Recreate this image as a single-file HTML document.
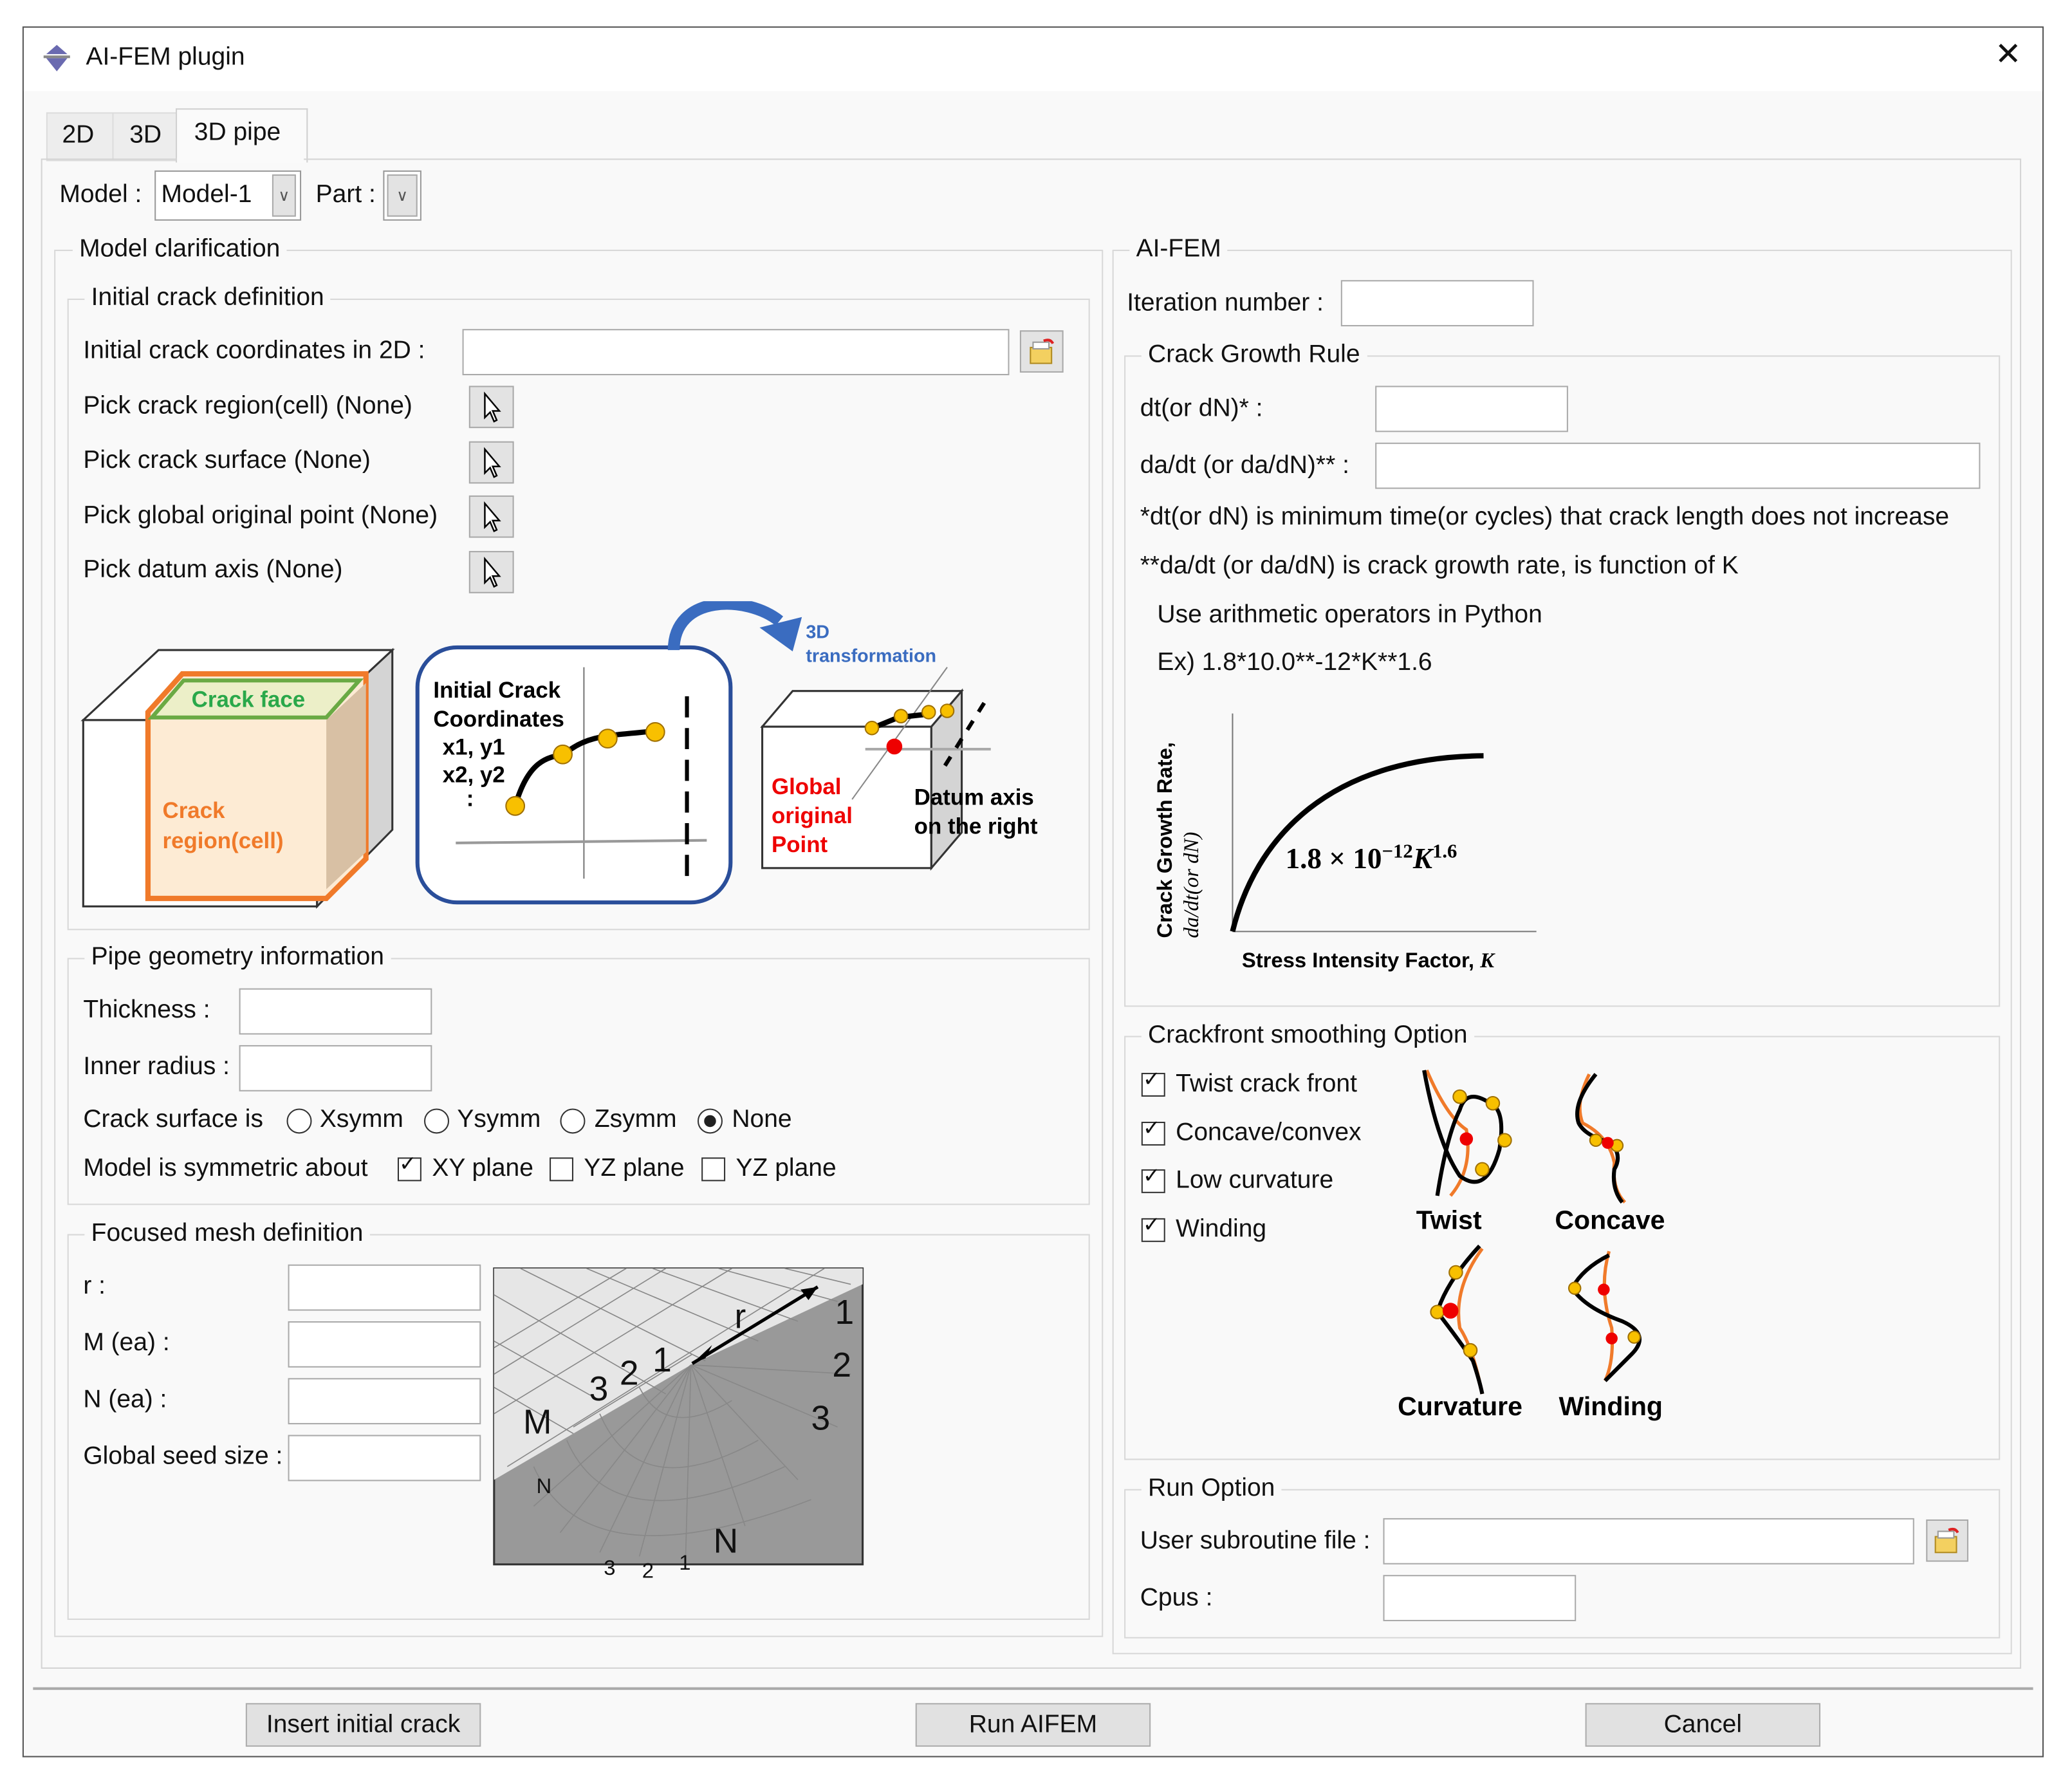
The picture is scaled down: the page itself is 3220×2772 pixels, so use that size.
<!DOCTYPE html>
<html><head><meta charset="utf-8"><style>
html,body{margin:0;padding:0;background:#fff;width:3220px;height:2772px;overflow:hidden}
#s{position:absolute;left:0;top:0;width:1570px;height:1350px;transform:scale(2.053);transform-origin:0 0;font-family:"Liberation Sans",sans-serif;font-size:19px;color:#111}
.a{position:absolute}
.t{position:absolute;white-space:nowrap;line-height:20px}
.g{position:absolute;border:1px solid #d8d8d8}
.gl{position:absolute;background:#f9f9f9;padding:0 5px;white-space:nowrap;line-height:20px}
.in{position:absolute;background:#fff;border:1px solid #aaa;box-sizing:border-box}
.pb{position:absolute;width:34px;height:32px;background:#e3e3e3;border:1px solid #a9a9a9;box-sizing:border-box}
.btn{position:absolute;height:33px;background:#e1e1e1;border:1px solid #adadad;box-sizing:border-box;text-align:center;line-height:31px}
.cb{position:absolute;width:18px;height:18px;border:1.5px solid #333;box-sizing:border-box;background:#fff}
.rd{position:absolute;width:19px;height:19px;border:1.5px solid #333;border-radius:50%;box-sizing:border-box;background:#fff}
</style></head><body><div id="s">
<div class="a" style="left:17px;top:20px;width:1528px;height:1308px;border:1.5px solid #555;background:#f9f9f9"></div>
<div class="a" style="left:18px;top:21px;width:1528px;height:48px;background:#fff"></div>
<svg class="a" style="left:31px;top:32px" width="24" height="24"><path d="M12 2 L20 9 H4 Z M4 12 H20 L12 22 Z" fill="#6a6ab0"/><rect x="2" y="10" width="20" height="2" fill="#888"/></svg>
<div class="t" style="left:65px;top:34px">AI-FEM plugin</div>
<div class="t" style="left:1510px;top:32px;font-size:24px">✕</div>
<div class="a" style="left:35px;top:85px;width:50px;height:35px;background:#ededed;border:1px solid #dcdcdc"></div>
<div class="a" style="left:85px;top:85px;width:48px;height:35px;background:#ededed;border:1px solid #dcdcdc"></div>
<div class="a" style="left:133px;top:82px;width:98px;height:40px;background:#fafafa;border:1px solid #d0d0d0;border-bottom:none"></div>
<div class="t" style="left:47px;top:93px">2D</div>
<div class="t" style="left:98px;top:93px">3D</div>
<div class="t" style="left:147px;top:91px">3D pipe</div>
<div class="a" style="left:31px;top:120px;width:1497px;height:1141px;border:1px solid #d4d4d4"></div>
<div class="a" style="left:134px;top:119px;width:96px;height:3px;background:#fafafa"></div>
<div class="t" style="left:45px;top:138px">Model :</div>
<div class="in" style="left:117px;top:129px;width:111px;height:38px;border-color:#999"></div>
<div class="t" style="left:122px;top:138px">Model-1</div>
<div class="a" style="left:206px;top:132px;width:18px;height:32px;background:#e3e3e3;border:1px solid #aaa;box-sizing:border-box;text-align:center;font-size:12px;line-height:30px;color:#555">∨</div>
<div class="t" style="left:239px;top:138px">Part :</div>
<div class="in" style="left:290px;top:129px;width:29px;height:38px;border-color:#999"></div>
<div class="a" style="left:293px;top:132px;width:23px;height:32px;background:#e3e3e3;border:1px solid #aaa;box-sizing:border-box;text-align:center;font-size:12px;line-height:30px;color:#555">∨</div>

<div class="g" style="left:41px;top:189px;width:792px;height:1048px"></div>
<div class="gl" style="left:55px;top:179px">Model clarification</div>
<div class="g" style="left:51px;top:226px;width:772px;height:476px"></div>
<div class="gl" style="left:64px;top:216px">Initial crack definition</div>
<div class="t" style="left:63px;top:256px">Initial crack coordinates in 2D :</div>
<div class="in" style="left:350px;top:249px;width:414px;height:35px"></div>
<div class="pb" style="left:772px;top:250px;width:33px"></div>
<svg class="a" style="left:778px;top:254px" width="22" height="24"><rect x="2" y="9" width="16" height="12" fill="#f3d060" stroke="#b08a20"/><rect x="4" y="5" width="12" height="5" fill="#fff" stroke="#999"/><path d="M12 4 Q17 2 19 6" stroke="#d22" fill="none" stroke-width="2"/></svg>
<div class="t" style="left:63px;top:298px">Pick crack region(cell) (None)</div>
<div class="t" style="left:63px;top:339px">Pick crack surface (None)</div>
<div class="t" style="left:63px;top:381px">Pick global original point (None)</div>
<div class="t" style="left:63px;top:422px">Pick datum axis (None)</div>
<div class="pb" style="left:355px;top:292px"></div><div class="pb" style="left:355px;top:334px"></div><div class="pb" style="left:355px;top:375px"></div><div class="pb" style="left:355px;top:417px"></div>
<svg class="a" style="left:355px;top:292px" width="34" height="160"><g fill="#fff" stroke="#000" stroke-width="1.2"><path id="c" d="M12 6 V24 L16 20 L19 27 L21 26 L18 19 L23 19 Z"/><use href="#c" y="42"/><use href="#c" y="83"/><use href="#c" y="125"/></g></svg>
<svg class="a" style="left:55px;top:455px" width="760" height="240" font-family="Liberation Sans" font-weight="bold">
<path d="M8 90 L65 37 H242 L185 90 Z" fill="#fff" stroke="#333" stroke-width="1.5"/>
<rect x="8" y="90" width="177" height="141" fill="#fff" stroke="#333" stroke-width="1.5"/>
<path d="M185 90 L242 37 V173 L185 231 Z" fill="#d4d4d4" stroke="#333" stroke-width="1.5"/>
<path d="M57 84 L83 55 H222 L222 195 L192 225 H57 Z" fill="#fdebd4" stroke="#f07a2a" stroke-width="4"/>
<path d="M192 90 L222 62 V190 L192 218 Z" fill="#d8c0a4"/>
<path d="M60 88 L84 60 H217 L192 88 Z" fill="#ecefc8" stroke="#6aaa44" stroke-width="3"/>
<text x="90" y="80" fill="#2aa84a" font-size="17">Crack face</text>
<text x="68" y="164" fill="#f07a2a" font-size="17">Crack</text>
<text x="68" y="187" fill="#f07a2a" font-size="17">region(cell)</text>
<rect x="261" y="35" width="237" height="193" rx="30" fill="#fff" stroke="#2a4e9a" stroke-width="3"/>
<path d="M455 37 C455 -5 510 -5 535 15" fill="none" stroke="#3a6cc0" stroke-width="9"/>
<path d="M520 20 L552 12 L545 38 Z" fill="#3a6cc0"/>
<text x="555" y="28" fill="#3a6cc0" font-size="14">3D</text>
<text x="555" y="46" fill="#3a6cc0" font-size="14">transformation</text>
<line x1="387" y1="210" x2="387" y2="50" stroke="#777"/><line x1="290" y1="183" x2="480" y2="181" stroke="#999" stroke-width="2"/>
<line x1="465" y1="72" x2="465" y2="210" stroke="#000" stroke-width="3" stroke-dasharray="16 8"/>
<text x="273" y="73" font-size="17">Initial Crack</text><text x="273" y="95" font-size="17">Coordinates</text>
<text x="280" y="116" font-size="17">x1, y1</text><text x="280" y="137" font-size="17">x2, y2</text><text x="298" y="155" font-size="17">:</text>
<path d="M335 155 C345 120 360 118 372 116 C390 100 410 102 442 98" fill="none" stroke="#000" stroke-width="4"/>
<g fill="#f8c000" stroke="#a07000"><circle cx="335" cy="155" r="7"/><circle cx="371" cy="116" r="7"/><circle cx="405" cy="104" r="7"/><circle cx="441" cy="99" r="7"/></g>
<path d="M522 95 L545 68 H673 L650 95 Z" fill="#fff" stroke="#333" stroke-width="1.5"/>
<rect x="522" y="95" width="128" height="107" fill="#fff" stroke="#333" stroke-width="1.5"/>
<path d="M650 95 L673 68 V175 L650 202 Z" fill="#d4d4d4" stroke="#333" stroke-width="1.5"/>
<line x1="600" y1="112" x2="695" y2="112" stroke="#aaa" stroke-width="2"/><line x1="590" y1="150" x2="662" y2="50" stroke="#888"/>
<path d="M603 97 L625 88 L652 85" stroke="#000" stroke-width="4" fill="none"/>
<g fill="#f8c000" stroke="#a07000"><circle cx="605" cy="96" r="5"/><circle cx="627" cy="87" r="5"/><circle cx="648" cy="84" r="5"/><circle cx="662" cy="83" r="5"/></g>
<circle cx="622" cy="110" r="6" fill="#e00"/>
<line x1="690" y1="77" x2="660" y2="125" stroke="#000" stroke-width="3" stroke-dasharray="8 8"/>
<text x="529" y="146" fill="#e00" font-size="17">Global</text><text x="529" y="168" fill="#e00" font-size="17">original</text><text x="529" y="190" fill="#e00" font-size="17">Point</text>
<text x="637" y="154" font-size="17">Datum axis</text><text x="637" y="176" font-size="17">on the right</text>
</svg>

<div class="g" style="left:51px;top:725px;width:772px;height:185px"></div>
<div class="gl" style="left:64px;top:715px">Pipe geometry information</div>
<div class="t" style="left:63px;top:755px">Thickness :</div>
<div class="in" style="left:181px;top:748px;width:146px;height:35px"></div>
<div class="t" style="left:63px;top:798px">Inner radius :</div>
<div class="in" style="left:181px;top:791px;width:146px;height:35px"></div>
<div class="t" style="left:63px;top:838px">Crack surface is</div>
<div class="rd" style="left:217px;top:839px"></div><div class="t" style="left:242px;top:838px">Xsymm</div>
<div class="rd" style="left:321px;top:839px"></div><div class="t" style="left:346px;top:838px">Ysymm</div>
<div class="rd" style="left:424px;top:839px"></div><div class="t" style="left:450px;top:838px">Zsymm</div>
<div class="rd" style="left:528px;top:839px"></div><div class="a" style="left:533px;top:844px;width:9px;height:9px;border-radius:50%;background:#222"></div><div class="t" style="left:554px;top:838px">None</div>
<div class="t" style="left:63px;top:875px">Model is symmetric about</div>
<div class="cb" style="left:301px;top:876px"></div><div class="t" style="left:302px;top:872px;font-size:16px">✓</div><div class="t" style="left:327px;top:875px">XY plane</div>
<div class="cb" style="left:416px;top:876px"></div><div class="t" style="left:442px;top:875px">YZ plane</div>
<div class="cb" style="left:531px;top:876px"></div><div class="t" style="left:557px;top:875px">YZ plane</div>

<div class="g" style="left:51px;top:934px;width:772px;height:290px"></div>
<div class="gl" style="left:64px;top:924px">Focused mesh definition</div>
<div class="t" style="left:63px;top:964px">r :</div>
<div class="t" style="left:63px;top:1007px">M (ea) :</div>
<div class="t" style="left:63px;top:1050px">N (ea) :</div>
<div class="t" style="left:63px;top:1093px">Global seed size :</div>
<div class="in" style="left:218px;top:957px;width:146px;height:35px"></div>
<div class="in" style="left:218px;top:1000px;width:146px;height:35px"></div>
<div class="in" style="left:218px;top:1043px;width:146px;height:35px"></div>
<div class="in" style="left:218px;top:1086px;width:146px;height:35px"></div>
<svg class="a" style="left:374px;top:960px;overflow:visible" width="280" height="225" font-family="Liberation Sans">
<rect x="0" y="0" width="279" height="224" fill="#999" stroke="#333" stroke-width="1.5"/>
<path d="M0 0 H279 V12 L149 73 L0 160 Z" fill="#e6e6e6"/>
<g stroke="#888" stroke-width="0.8" fill="none">
<path d="M0 20 L130 95 M0 55 L80 100 M0 90 L60 125 M20 0 L160 70 M70 0 L200 55 M120 0 L230 40 M170 0 L260 25 M220 0 L270 12"/>
<path d="M0 60 L100 0 M0 110 L180 0 M10 150 L250 0 M60 120 L150 65 M130 0 L0 80"/>
<path d="M149 73 L30 180 M149 73 L50 200 M149 73 L80 215 M149 73 L110 218 M149 73 L145 218 M149 73 L190 195 M149 73 L230 160 M149 73 L260 120 M149 73 L270 80"/>
<path d="M110 90 Q130 130 180 100 M80 110 Q110 180 200 130 M55 130 Q90 210 220 150 M30 150 Q70 240 240 175"/>
</g>
<path d="M150 72 L245 14" stroke="#000" stroke-width="2.5"/><path d="M150 72 L165 58 L160 68 Z M245 14 L232 16 L238 24 Z" fill="#000"/>
<g font-size="26" fill="#111"><text x="182" y="45">r</text><text x="258" y="42">1</text><text x="256" y="82">2</text><text x="240" y="122">3</text><text x="120" y="78">1</text><text x="95" y="88">2</text><text x="72" y="100">3</text><text x="22" y="125">M</text><text x="166" y="215">N</text></g>
<g font-size="16" fill="#111"><text x="32" y="170">N</text><text x="83" y="232">3</text><text x="112" y="234">2</text><text x="140" y="228">1</text></g>
</svg>

<div class="g" style="left:842px;top:189px;width:679px;height:1061px"></div>
<div class="gl" style="left:855px;top:179px">AI-FEM</div>
<div class="t" style="left:853px;top:220px">Iteration number :</div>
<div class="in" style="left:1015px;top:212px;width:146px;height:35px"></div>
<div class="g" style="left:851px;top:269px;width:661px;height:491px"></div>
<div class="gl" style="left:864px;top:259px">Crack Growth Rule</div>
<div class="t" style="left:863px;top:300px">dt(or dN)* :</div>
<div class="in" style="left:1041px;top:292px;width:146px;height:35px"></div>
<div class="t" style="left:863px;top:343px">da/dt (or da/dN)** :</div>
<div class="in" style="left:1041px;top:335px;width:458px;height:35px"></div>
<div class="t" style="left:863px;top:382px">*dt(or dN) is minimum time(or cycles) that crack length does not increase</div>
<div class="t" style="left:863px;top:419px">**da/dt (or da/dN) is crack growth rate, is function of K</div>
<div class="t" style="left:876px;top:456px">Use arithmetic operators in Python</div>
<div class="t" style="left:876px;top:492px">Ex) 1.8*10.0**-12*K**1.6</div>
<svg class="a" style="left:865px;top:535px" width="310" height="210" font-family="Liberation Sans">
<line x1="68" y1="170" x2="68" y2="5" stroke="#777"/><line x1="68" y1="170" x2="298" y2="170" stroke="#777"/>
<path d="M68 170 C85 100 140 38 258 37" fill="none" stroke="#000" stroke-width="4"/>
<text x="108" y="122" font-family="Liberation Serif" font-weight="bold" font-size="22">1.8 × 10<tspan dy="-8" font-size="15">−12</tspan><tspan dy="8" font-style="italic">K</tspan><tspan dy="-8" font-size="15">1.6</tspan></text>
<text x="75" y="197" font-weight="bold" font-size="16">Stress Intensity Factor, <tspan font-style="italic" font-family="Liberation Serif">K</tspan></text>
<text transform="translate(22,175) rotate(-90)" font-weight="bold" font-size="16">Crack Growth Rate,</text>
<text transform="translate(42,175) rotate(-90)" font-style="italic" font-family="Liberation Serif" font-size="16">da/dt(or dN)</text>
</svg>
<div class="g" style="left:851px;top:784px;width:661px;height:319px"></div>
<div class="gl" style="left:864px;top:774px">Crackfront smoothing Option</div>
<div class="cb" style="left:864px;top:812px"></div><div class="t" style="left:865px;top:808px;font-size:16px">✓</div><div class="t" style="left:890px;top:811px">Twist crack front</div>
<div class="cb" style="left:864px;top:849px"></div><div class="t" style="left:865px;top:845px;font-size:16px">✓</div><div class="t" style="left:890px;top:848px">Concave/convex</div>
<div class="cb" style="left:864px;top:885px"></div><div class="t" style="left:865px;top:881px;font-size:16px">✓</div><div class="t" style="left:890px;top:884px">Low curvature</div>
<div class="cb" style="left:864px;top:922px"></div><div class="t" style="left:865px;top:918px;font-size:16px">✓</div><div class="t" style="left:890px;top:921px">Winding</div>
<svg class="a" style="left:1050px;top:805px" width="240" height="280" font-family="Liberation Sans" font-weight="bold" font-size="20">
<path d="M30 5 Q45 40 60 50 Q65 80 48 100" stroke="#f07a2a" stroke-width="2.5" fill="none"/>
<path d="M28 5 Q38 60 55 85 Q75 100 85 65 Q90 35 78 30 Q60 18 55 35 Q45 55 38 100" stroke="#000" stroke-width="3" fill="none"/>
<g fill="#f8c000" stroke="#a07000"><circle cx="55" cy="25" r="5"/><circle cx="80" cy="30" r="5"/><circle cx="89" cy="58" r="5"/><circle cx="72" cy="80" r="5"/></g><circle cx="60" cy="57" r="5" fill="#e00"/>
<text x="22" y="125">Twist</text>
<path d="M153 8 Q142 30 148 45 Q168 55 172 75 Q170 95 180 105" stroke="#f07a2a" stroke-width="2.5" fill="none"/>
<path d="M158 8 Q140 30 145 45 Q150 55 170 60 Q178 70 172 80 Q170 95 178 105" stroke="#000" stroke-width="3" fill="none"/>
<g fill="#f8c000" stroke="#a07000"><circle cx="158" cy="58" r="4.5"/><circle cx="174" cy="62" r="4.5"/></g><circle cx="167" cy="60" r="4.5" fill="#e00"/>
<text x="127" y="125">Concave</text>
<path d="M72 140 Q50 170 55 200 Q65 215 72 250" stroke="#f07a2a" stroke-width="2.5" fill="none"/>
<path d="M70 138 Q45 165 38 188 Q55 210 65 225 Q70 240 72 250" stroke="#000" stroke-width="3" fill="none"/>
<g fill="#f8c000" stroke="#a07000"><circle cx="52" cy="158" r="5"/><circle cx="38" cy="188" r="5"/><circle cx="63" cy="217" r="5"/></g><circle cx="48" cy="187" r="6" fill="#e00"/>
<text x="8" y="266">Curvature</text>
<path d="M168 142 Q160 170 170 200 Q172 225 165 240" stroke="#f07a2a" stroke-width="2.5" fill="none"/>
<path d="M168 145 Q148 155 140 170 Q150 185 178 195 Q200 205 185 220 Q175 230 165 240" stroke="#000" stroke-width="3" fill="none"/>
<g fill="#f8c000" stroke="#a07000"><circle cx="142" cy="170" r="4.5"/><circle cx="187" cy="207" r="4.5"/></g><g fill="#e00"><circle cx="164" cy="171" r="4.5"/><circle cx="170" cy="208" r="4.5"/></g>
<text x="130" y="266">Winding</text>
</svg>
<div class="g" style="left:851px;top:1127px;width:661px;height:111px"></div>
<div class="gl" style="left:864px;top:1117px">Run Option</div>
<div class="t" style="left:863px;top:1157px">User subroutine file :</div>
<div class="in" style="left:1047px;top:1149px;width:402px;height:35px"></div>
<div class="pb" style="left:1458px;top:1150px;width:32px"></div>
<svg class="a" style="left:1463px;top:1154px" width="22" height="24"><rect x="2" y="9" width="16" height="12" fill="#f3d060" stroke="#b08a20"/><rect x="4" y="5" width="12" height="5" fill="#fff" stroke="#999"/><path d="M12 4 Q17 2 19 6" stroke="#d22" fill="none" stroke-width="2"/></svg>
<div class="t" style="left:863px;top:1200px">Cpus :</div>
<div class="in" style="left:1047px;top:1192px;width:146px;height:35px"></div>

<div class="a" style="left:25px;top:1277px;width:1514px;height:2px;background:#aaa"></div>
<div class="btn" style="left:186px;top:1289px;width:178px">Insert initial crack</div>
<div class="btn" style="left:693px;top:1289px;width:178px">Run AIFEM</div>
<div class="btn" style="left:1200px;top:1289px;width:178px">Cancel</div>
</div></body></html>
